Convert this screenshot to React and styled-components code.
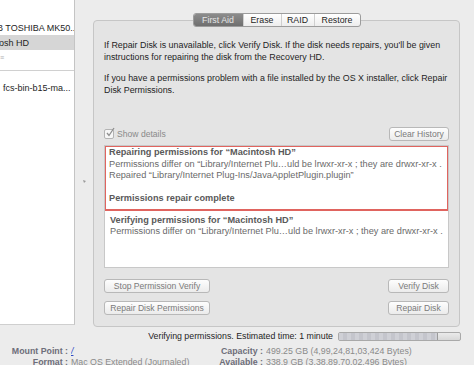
import React from "react";
import styled, { createGlobalStyle } from "styled-components";

const GlobalStyle = createGlobalStyle`
  html, body {
    margin: 0;
    padding: 0;
    background: #ececec;
  }
  body {
    font-family: "Liberation Sans", Arial, sans-serif;
  }
`;

const Window = styled.div`
  width: 474px;
  height: 365px;
  overflow: hidden;
  display: flex;
  flex-direction: column;
  background: #ececec;
`;

const Top = styled.div`
  display: flex;
  align-items: flex-start;
  height: 327px;
  flex-shrink: 0;
`;

const Sidebar = styled.div`
  width: 75px;
  height: 325px;
  box-sizing: border-box;
  padding-top: 20px;
  background: #fff;
  border-right: 1px solid #c4c4c4;
  border-bottom: 1px solid #cfcfcf;
  overflow: hidden;
  font-size: 9px;
  color: #1e1e1e;
`;

const SideItem = styled.div`
  height: 15px;
  display: flex;
  align-items: center;
  white-space: nowrap;
  background: ${(p) => (p.$selected ? "#d6d6d6" : "transparent")};
  & > span {
    margin-left: ${(p) => p.$shift || 0}px;
  }
`;

const SideIcon = styled.span`
  font-size: 7px;
  color: #b0b0b0;
`;

const SideSeparator = styled.div`
  height: 1px;
  background: #d0d0d0;
  margin: 5px 0 9px;
`;

const Main = styled.div`
  position: relative;
  flex: 1;
  height: 327px;
  box-sizing: border-box;
  padding: 20px 14px 0 18px;
`;

const Panel = styled.div`
  height: 307px;
  box-sizing: border-box;
  border: 1px solid #c6c6c6;
  border-radius: 4px;
  background: #e4e4e4;
  padding: 0 10px 11px;
  display: flex;
  flex-direction: column;
`;

const Tabs = styled.div`
  align-self: center;
  margin-top: -8px;
  display: flex;
  height: 14px;
  border: 1px solid #9c9c9c;
  border-radius: 3px;
  overflow: hidden;
  box-sizing: border-box;
  background: linear-gradient(#ffffff, #ededed);
`;

const Tab = styled.div`
  width: ${(p) => p.$w}px;
  display: flex;
  align-items: center;
  justify-content: center;
  font-size: 8.8px;
  color: ${(p) => (p.$active ? "#e6e6e6" : "#1e1e1e")};
  background: ${(p) =>
    p.$active ? "linear-gradient(#8c8c8c, #6f6f6f)" : "transparent"};
  border-left: ${(p) => (p.$first ? "none" : "1px solid #cfcfcf")};
`;

const Intro = styled.div`
  margin-top: 12px;
  font-size: 8.9px;
  line-height: 12px;
  color: #1e1e1e;
  white-space: nowrap;
  & p {
    margin: 0 0 9px;
  }
  & p:last-child {
    margin-bottom: 0;
  }
`;

const DetailsRow = styled.div`
  margin-top: 31px;
  height: 14px;
  display: flex;
  align-items: center;
  justify-content: space-between;
`;

const CheckLabel = styled.label`
  display: flex;
  align-items: center;
  gap: 3px;
  font-size: 8.6px;
  color: #8a8a8a;
`;

const CheckBox = styled.span`
  width: 8px;
  height: 8px;
  border: 1px solid #b4b4b4;
  border-radius: 2px;
  background: #f6f6f6;
  position: relative;
  display: inline-block;
  & svg {
    position: absolute;
    left: 0;
    top: -3px;
  }
`;

const Btn = styled.button`
  width: ${(p) => p.$w}px;
  height: 14px;
  padding: 0;
  box-sizing: border-box;
  border: 1px solid #b8b8b8;
  border-radius: 3px;
  background: linear-gradient(#fdfdfd, #ebebeb);
  font-family: inherit;
  font-size: 8.6px;
  line-height: 12px;
  color: #7a7a7a;
`;

const LogBox = styled.div`
  margin-top: 4px;
  flex: 1;
  background: #fff;
  border: 1px solid #c8c8c8;
  font-size: 9.2px;
  line-height: 11.5px;
  color: #6a6a6a;
  white-space: nowrap;
  overflow: hidden;
`;

const Highlight = styled.div`
  margin: -1px -1px 0;
  border: 2px solid #e0645f;
  padding: 0 3px 4px;
`;

const LogGroup = styled.div`
  padding: 4px 5px;
`;

const LogLine = styled.div`
  height: 11.5px;
  font-weight: ${(p) => (p.$bold ? 700 : 400)};
  color: ${(p) => (p.$bold ? "#5a5a5a" : "#6a6a6a")};
`;

const ButtonRows = styled.div`
  margin-top: 11px;
  display: flex;
  flex-direction: column;
  gap: 8px;
`;

const ButtonRow = styled.div`
  display: flex;
  justify-content: space-between;
`;

const Cursor = styled.span`
  position: absolute;
  left: 8px;
  top: 170px;
  width: 4px;
  height: 4px;
`;

const StatusRow = styled.div`
  height: 18px;
  flex-shrink: 0;
  display: flex;
  align-items: center;
  justify-content: flex-end;
  gap: 5px;
  padding-right: 13px;
  font-size: 8.8px;
  color: #1e1e1e;
`;

const Progress = styled.div`
  width: 123px;
  height: 9px;
  box-sizing: border-box;
  border: 1px solid #a9a9a9;
  border-radius: 2px;
  background: linear-gradient(#eaeaea, #d8d8d8);
  overflow: hidden;
`;

const ProgressFill = styled.div`
  height: 100%;
  background: repeating-linear-gradient(
    90deg,
    #cfd0d6 0px,
    #cfd0d6 4px,
    #c4c5cc 4px,
    #c4c5cc 8px
  );
  border-right: 1px solid #9a9a9a;
`;

const InfoGrid = styled.div`
  padding-top: 1px;
  display: grid;
  grid-template-columns: 68px 144px 45px 1fr;
  column-gap: 3px;
  font-size: 8.8px;
  line-height: 11px;
  white-space: nowrap;
`;

const InfoLabel = styled.div`
  text-align: right;
  font-weight: 700;
  color: #6e6e7a;
`;

const InfoValue = styled.div`
  color: #8a8a8a;
  overflow: hidden;
`;

const Link = styled.span`
  color: #2a48c4;
  text-decoration: underline;
  font-style: italic;
`;

export default function App() {
  const progress = 81;
  return (
    <>
      <GlobalStyle />
      <Window>
        <Top>
          <Sidebar>
            <SideItem $shift={-3}>
              <span>B TOSHIBA MK50...</span>
            </SideItem>
            <SideItem $selected $shift={-1}>
              <span>osh HD</span>
            </SideItem>
            <SideItem>
              <SideIcon>≡</SideIcon>
            </SideItem>
            <SideSeparator />
            <SideItem $shift={3}>
              <span>fcs-bin-b15-ma...</span>
            </SideItem>
          </Sidebar>
          <Main>
            <Panel>
              <Tabs>
                <Tab $w={49} $active $first>
                  First Aid
                </Tab>
                <Tab $w={37}>Erase</Tab>
                <Tab $w={32}>RAID</Tab>
                <Tab $w={45}>Restore</Tab>
              </Tabs>
              <Intro>
                <p>
                  If Repair Disk is unavailable, click Verify Disk. If the disk
                  needs repairs, you'll be given
                  <br />
                  instructions for repairing the disk from the Recovery HD.
                </p>
                <p>
                  If you have a permissions problem with a file installed by
                  the OS X installer, click Repair
                  <br />
                  Disk Permissions.
                </p>
              </Intro>
              <DetailsRow>
                <CheckLabel>
                  <CheckBox>
                    <svg width="10" height="10" viewBox="0 0 10 10">
                      <path
                        d="M2 6 L4 8.5 L9 1"
                        fill="none"
                        stroke="#8f8f8f"
                        strokeWidth="1.3"
                      />
                    </svg>
                  </CheckBox>
                  Show details
                </CheckLabel>
                <Btn $w={60}>Clear History</Btn>
              </DetailsRow>
              <LogBox>
                <Highlight>
                  <LogLine $bold>Repairing permissions for “Macintosh HD”</LogLine>
                  <LogLine>
                    Permissions differ on “Library/Internet Plu…uld be
                    lrwxr-xr-x ; they are drwxr-xr-x .
                  </LogLine>
                  <LogLine>
                    Repaired “Library/Internet Plug-Ins/JavaAppletPlugin.plugin”
                  </LogLine>
                  <LogLine />
                  <LogLine $bold>Permissions repair complete</LogLine>
                </Highlight>
                <LogGroup>
                  <LogLine $bold>Verifying permissions for “Macintosh HD”</LogLine>
                  <LogLine>
                    Permissions differ on “Library/Internet Plu…uld be
                    lrwxr-xr-x ; they are drwxr-xr-x .
                  </LogLine>
                </LogGroup>
              </LogBox>
              <ButtonRows>
                <ButtonRow>
                  <Btn $w={106}>Stop Permission Verify</Btn>
                  <Btn $w={61}>Verify Disk</Btn>
                </ButtonRow>
                <ButtonRow>
                  <Btn $w={106}>Repair Disk Permissions</Btn>
                  <Btn $w={61}>Repair Disk</Btn>
                </ButtonRow>
              </ButtonRows>
            </Panel>
            <Cursor>
              <svg width="4" height="4" viewBox="0 0 4 4">
                <path d="M0 0 L3 1 L1 3 Z" fill="#9a9a9a" />
              </svg>
            </Cursor>
          </Main>
        </Top>
        <StatusRow>
          <span>Verifying permissions. Estimated time: 1 minute</span>
          <Progress>
            <ProgressFill style={{ width: `${progress}%` }} />
          </Progress>
        </StatusRow>
        <InfoGrid>
          <InfoLabel>Mount Point :</InfoLabel>
          <InfoValue>
            <Link>/</Link>
          </InfoValue>
          <InfoLabel>Capacity :</InfoLabel>
          <InfoValue>499.25 GB (4,99,24,81,03,424 Bytes)</InfoValue>
          <InfoLabel>Format :</InfoLabel>
          <InfoValue>Mac OS Extended (Journaled)</InfoValue>
          <InfoLabel>Available :</InfoLabel>
          <InfoValue>338.9 GB (3,38,89,70,02,496 Bytes)</InfoValue>
        </InfoGrid>
      </Window>
    </>
  );
}
